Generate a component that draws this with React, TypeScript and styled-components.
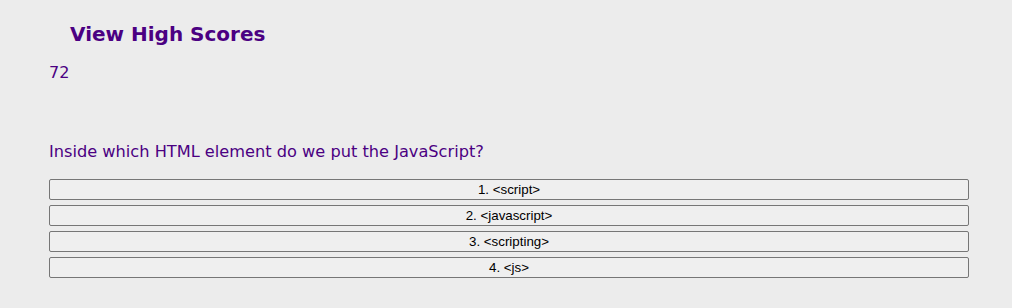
import React from 'react';
import styled, { createGlobalStyle } from 'styled-components';

const GlobalStyle = createGlobalStyle`
  html, body {
    margin: 0;
    padding: 0;
    background: #ececec;
  }
  body {
    font-family: "DejaVu Sans", Verdana, sans-serif;
    color: #4b0082;
  }
`;

const choices = ['<script>', '<javascript>', '<scripting>', '<js>'];

const App: React.FC = () => (
  <>
    <GlobalStyle />
    <StyledPage>
      <StyledHeader>
        <StyledTitle>View High Scores</StyledTitle>
      </StyledHeader>
      <StyledTimer>72</StyledTimer>
      <StyledQuiz>
        <StyledQuestion>Inside which HTML element do we put the JavaScript?</StyledQuestion>
        <StyledChoices>
          {choices.map((choice, index) => (
            <StyledChoice key={choice}>
              {index + 1}. {choice}
            </StyledChoice>
          ))}
        </StyledChoices>
      </StyledQuiz>
    </StyledPage>
  </>
);

export default App;

const StyledPage = styled.div`
  padding: 0 43px 0 49px;
`;

const StyledHeader = styled.header`
  padding: 22px 0 0 21px;
`;

const StyledTitle = styled.h2`
  margin: 0;
  font-size: 20px;
  line-height: 24px;
  font-weight: bold;
  color: #4b0082;
`;

const StyledTimer = styled.div`
  margin-top: 17px;
  font-size: 16px;
  line-height: 20px;
`;

const StyledQuiz = styled.section`
  margin-top: 59px;
`;

const StyledQuestion = styled.p`
  margin: 0;
  font-size: 16.2px;
  line-height: 20px;
`;

const StyledChoices = styled.div`
  margin-top: 17px;
  display: flex;
  flex-direction: column;
  gap: 5px;
`;

const StyledChoice = styled.button`
  display: block;
  width: 100%;
  height: 21px;
  padding: 1px 6px;
  font-family: "Liberation Sans", Arial, sans-serif;
  font-size: 13.33px;
  color: #000;
  background: #efefef;
  border: 1px solid #767676;
  border-radius: 2px;
`;
